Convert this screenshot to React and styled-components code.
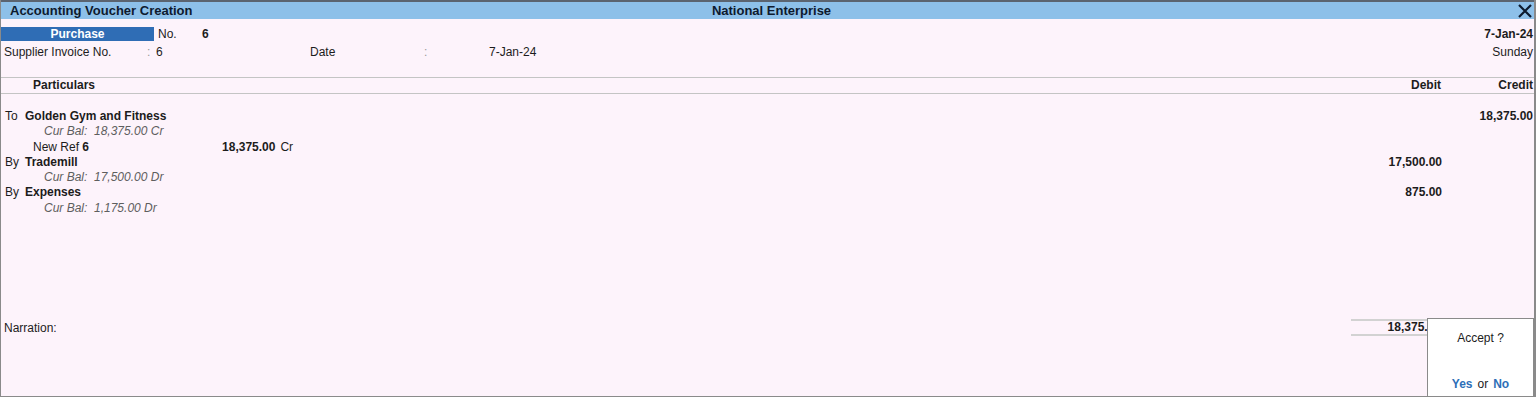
import React from 'react';
import styled, { createGlobalStyle } from 'styled-components';

const Global = createGlobalStyle`
  html, body { margin: 0; padding: 0; background: #fdf3fb; }
  body {
    font-family: "Liberation Sans", Arial, sans-serif;
    font-size: 12px;
    color: #1c1c1c;
  }
  * { box-sizing: border-box; }
`;

const Window = styled.div`
  position: relative;
  width: 1536px;
  height: 397px;
  display: flex;
  flex-direction: column;
  background: #fdf3fb;
  border-left: 1px solid #8a8a8a;
  border-right: 2px solid #8a8a8a;
  border-bottom: 1px solid #8a8a8a;
  overflow: hidden;
`;

const TitleBar = styled.div`
  height: 19px;
  display: grid;
  grid-template-columns: 1fr auto 1fr;
  align-items: center;
  background: #8dc0e9;
  border-top: 2px solid #5b6470;
  color: #0d1a2e;
  font-weight: bold;
  font-size: 13px;
  padding: 0 1px 0 9px;
`;

const CloseBtn = styled.div`
  justify-self: end;
  display: flex;
  align-items: center;
`;

const Header = styled.div`
  padding-top: 8px;
`;

const HeadRow = styled.div`
  display: flex;
  align-items: center;
  height: ${p => p.h}px;
  margin-top: ${p => p.mt || 0}px;
  line-height: ${p => p.h}px;
`;

const VoucherType = styled.div`
  width: 153px;
  height: 14px;
  line-height: 14px;
  background: #2f6db5;
  color: #fff;
  font-weight: bold;
  text-align: center;
`;

const Cell = styled.span`
  width: ${p => (p.w ? `${p.w}px` : 'auto')};
  padding-left: ${p => p.pl || 0}px;
  font-weight: ${p => (p.bold ? 'bold' : 'normal')};
  color: ${p => (p.dim ? '#9a9a9a' : 'inherit')};
  flex-shrink: 0;
`;

const RightInfo = styled.span`
  margin-left: auto;
  padding-right: 1px;
  font-weight: ${p => (p.bold ? 'bold' : 'normal')};
`;

const TableHead = styled.div`
  margin-top: 17px;
  display: grid;
  grid-template-columns: 1fr 120px 92px;
  height: 17px;
  line-height: 15px;
  border-top: 1px solid #c4c4c4;
  border-bottom: 1px solid #c4c4c4;
  font-weight: bold;
`;

const HeadCell = styled.div`
  text-align: ${p => p.align || 'left'};
  padding-left: ${p => p.pl || 0}px;
  padding-right: ${p => p.pr || 0}px;
`;

const Entries = styled.div`
  padding-top: 15px;
  flex: 1;
`;

const Row = styled.div`
  display: grid;
  grid-template-columns: 1fr 121px 92px;
  height: 15.3px;
  line-height: 15.3px;
`;

const Particular = styled.div`
  display: flex;
  padding-left: ${p => p.indent}px;
`;

const Dir = styled.span`
  width: 20px;
`;

const Ledger = styled.span`
  font-weight: bold;
`;

const CurBal = styled.span`
  font-style: italic;
  color: #5e5e5e;
  white-space: pre;
`;

const Amount = styled.div`
  text-align: right;
  font-weight: bold;
  padding-right: ${p => p.pr || 0}px;
`;

const RefAmount = styled.span`
  margin-left: ${p => p.ml}px;
  font-weight: bold;
  span { font-weight: normal; margin-left: 5px; }
`;

const Footer = styled.div`
  display: grid;
  grid-template-columns: 1fr 90px 93px;
  height: 17px;
  margin-bottom: 60px;
  align-items: center;
`;

const Narration = styled.div`
  padding-left: 3px;
`;

const Total = styled.div`
  height: 17px;
  line-height: 13px;
  border-top: 2px solid #d2d2d2;
  border-bottom: 2px solid #d2d2d2;
  text-align: right;
  font-weight: bold;
`;

const AcceptBox = styled.div`
  position: absolute;
  left: 1426px;
  top: 318px;
  width: 107px;
  height: 79px;
  background: #ffffff;
  border: 1px solid #8a8a8a;
  border-bottom: none;
  display: flex;
  flex-direction: column;
  align-items: center;
  justify-content: space-between;
  padding: 12px 0 6px;
`;

const Question = styled.div`
  font-size: 12px;
`;

const Choices = styled.div`
  b { color: #2d6fb8; }
  span { margin: 0 5px; }
`;

const CloseIcon = () => (
  <svg width="16" height="16" viewBox="0 0 16 16">
    <path d="M2 2 L14 14 M14 2 L2 14" stroke="#0d1a2e" strokeWidth="2.2" fill="none" />
  </svg>
);

const entries = [
  { kind: 'ledger', dir: 'To', name: 'Golden Gym and Fitness', credit: '18,375.00' },
  { kind: 'bal', text: 'Cur Bal:  18,375.00 Cr' },
  { kind: 'ref' },
  { kind: 'ledger', dir: 'By', name: 'Trademill', debit: '17,500.00' },
  { kind: 'bal', text: 'Cur Bal:  17,500.00 Dr' },
  { kind: 'ledger', dir: 'By', name: 'Expenses', debit: '875.00' },
  { kind: 'bal', text: 'Cur Bal:  1,175.00 Dr' },
];

const renderParticular = e => {
  if (e.kind === 'ledger') {
    return (
      <Particular indent={4}>
        <Dir>{e.dir}</Dir>
        <Ledger>{e.name}</Ledger>
      </Particular>
    );
  }
  if (e.kind === 'bal') {
    return (
      <Particular indent={43}>
        <CurBal>{e.text}</CurBal>
      </Particular>
    );
  }
  return (
    <Particular indent={32}>
      <span>New Ref&nbsp;</span>
      <Ledger>6</Ledger>
      <RefAmount ml={133}>
        18,375.00<span>Cr</span>
      </RefAmount>
    </Particular>
  );
};

export default function App() {
  return (
    <>
      <Global />
      <Window>
        <TitleBar>
          <span>Accounting Voucher Creation</span>
          <span>National Enterprise</span>
          <CloseBtn>
            <CloseIcon />
          </CloseBtn>
        </TitleBar>

        <Header>
          <HeadRow h={14}>
            <VoucherType>Purchase</VoucherType>
            <Cell w={48} pl={4}>No.</Cell>
            <Cell bold>6</Cell>
            <RightInfo bold>7-Jan-24</RightInfo>
          </HeadRow>
          <HeadRow h={15} mt={4}>
            <Cell w={146} pl={3}>Supplier Invoice No.</Cell>
            <Cell w={9} dim>:</Cell>
            <Cell w={154}>6</Cell>
            <Cell w={114}>Date</Cell>
            <Cell w={65} dim>:</Cell>
            <Cell>7-Jan-24</Cell>
            <RightInfo>Sunday</RightInfo>
          </HeadRow>
        </Header>

        <TableHead>
          <HeadCell pl={32}>Particulars</HeadCell>
          <HeadCell align="right" pr={1}>Debit</HeadCell>
          <HeadCell align="right" pr={1}>Credit</HeadCell>
        </TableHead>

        <Entries>
          {entries.map((e, i) => (
            <Row key={i}>
              {renderParticular(e)}
              <Amount>{e.debit || ''}</Amount>
              <Amount pr={1}>{e.credit || ''}</Amount>
            </Row>
          ))}
        </Entries>

        <Footer>
          <Narration>Narration:</Narration>
          <Total>18,375.00</Total>
          <div />
        </Footer>

        <AcceptBox>
          <Question>Accept ?</Question>
          <Choices>
            <b>Yes</b>
            <span>or</span>
            <b>No</b>
          </Choices>
        </AcceptBox>
      </Window>
    </>
  );
}
